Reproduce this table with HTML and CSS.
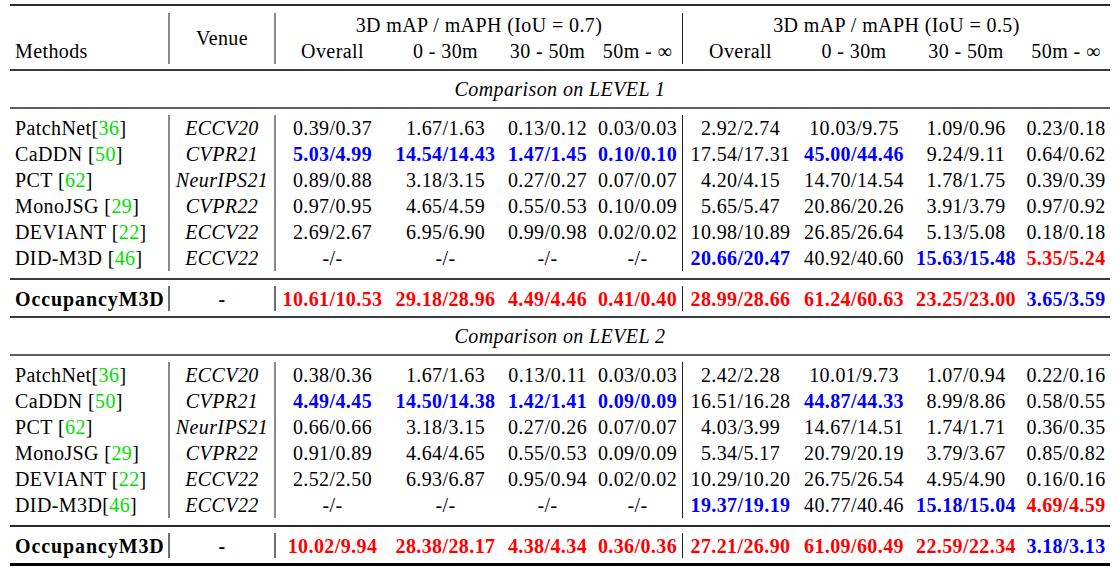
FILE: index.html
```html
<!DOCTYPE html>
<html lang="en">
<head>
<meta charset="utf-8">
<title>OccupancyM3D comparison</title>
<link rel="stylesheet" href="styles.css">
</head>
<body>
<div class="page">
<table class="results">
  <colgroup>
    <col class="c-method"><col class="c-venue">
    <col class="c-a1"><col class="c-a2"><col class="c-a3"><col class="c-a4">
    <col class="c-b1"><col class="c-b2"><col class="c-b3"><col class="c-b4">
  </colgroup>
  <tbody>
    <tr class="rule"><td colspan="10" class="r-top"><div class="line line-top"></div></td></tr>
    <tr class="head1">
      <td rowspan="2" class="method sep-l methods-head">Methods</td>
      <td rowspan="2" class="venue-head sep-l">Venue</td>
      <td colspan="4" class="sep-d">3D mAP / mAPH (IoU = 0.7)</td>
      <td colspan="4">3D mAP / mAPH (IoU = 0.5)</td>
    </tr>
    <tr class="head2">
      <td>Overall</td><td>0 - 30m</td><td>30 - 50m</td><td class="sep-d">50m - ∞</td>
      <td>Overall</td><td>0 - 30m</td><td>30 - 50m</td><td>50m - ∞</td>
    </tr>
    <tr class="rule"><td colspan="10" class="r-gap-top"><div class="line line-mid"></div></td></tr>
    <tr class="caption"><td colspan="10">Comparison on LEVEL 1</td></tr>
    <tr class="rule"><td colspan="10" class="r-gap-bottom"><div class="line line-soft"></div></td></tr>

    <tr class="data">
      <td class="method sep-l">PatchNet[<span class="cite">36</span>]</td><td class="venue sep-l">ECCV20</td>
      <td>0.39/0.37</td><td>1.67/1.63</td><td>0.13/0.12</td><td class="sep-d">0.03/0.03</td>
      <td>2.92/2.74</td><td>10.03/9.75</td><td>1.09/0.96</td><td>0.23/0.18</td>
    </tr>
    <tr class="data">
      <td class="method sep-l">CaDDN [<span class="cite">50</span>]</td><td class="venue sep-l">CVPR21</td>
      <td class="blue">5.03/4.99</td><td class="blue">14.54/14.43</td><td class="blue">1.47/1.45</td><td class="blue sep-d">0.10/0.10</td>
      <td>17.54/17.31</td><td class="blue">45.00/44.46</td><td>9.24/9.11</td><td>0.64/0.62</td>
    </tr>
    <tr class="data">
      <td class="method sep-l">PCT [<span class="cite">62</span>]</td><td class="venue sep-l">NeurIPS21</td>
      <td>0.89/0.88</td><td>3.18/3.15</td><td>0.27/0.27</td><td class="sep-d">0.07/0.07</td>
      <td>4.20/4.15</td><td>14.70/14.54</td><td>1.78/1.75</td><td>0.39/0.39</td>
    </tr>
    <tr class="data">
      <td class="method sep-l">MonoJSG [<span class="cite">29</span>]</td><td class="venue sep-l">CVPR22</td>
      <td>0.97/0.95</td><td>4.65/4.59</td><td>0.55/0.53</td><td class="sep-d">0.10/0.09</td>
      <td>5.65/5.47</td><td>20.86/20.26</td><td>3.91/3.79</td><td>0.97/0.92</td>
    </tr>
    <tr class="data">
      <td class="method sep-l">DEVIANT [<span class="cite">22</span>]</td><td class="venue sep-l">ECCV22</td>
      <td>2.69/2.67</td><td>6.95/6.90</td><td>0.99/0.98</td><td class="sep-d">0.02/0.02</td>
      <td>10.98/10.89</td><td>26.85/26.64</td><td>5.13/5.08</td><td>0.18/0.18</td>
    </tr>
    <tr class="data">
      <td class="method sep-l">DID-M3D [<span class="cite">46</span>]</td><td class="venue sep-l">ECCV22</td>
      <td>-/-</td><td>-/-</td><td>-/-</td><td class="sep-d">-/-</td>
      <td class="blue">20.66/20.47</td><td>40.92/40.60</td><td class="blue">15.63/15.48</td><td class="red">5.35/5.24</td>
    </tr>

    <tr class="rule"><td colspan="10" class="r-gap-both"><div class="line line-mid"></div></td></tr>
    <tr class="ours">
      <td class="method sep-o">OccupancyM3D</td><td class="sep-o">-</td>
      <td class="red">10.61/10.53</td><td class="red">29.18/28.96</td><td class="red">4.49/4.46</td><td class="red sep-d">0.41/0.40</td>
      <td class="red">28.99/28.66</td><td class="red">61.24/60.63</td><td class="red">23.25/23.00</td><td class="blue">3.65/3.59</td>
    </tr>
    <tr class="rule"><td colspan="10" class="r-gap-top"><div class="line line-mid"></div></td></tr>
    <tr class="caption"><td colspan="10">Comparison on LEVEL 2</td></tr>
    <tr class="rule"><td colspan="10" class="r-gap-bottom"><div class="line line-soft"></div></td></tr>

    <tr class="data">
      <td class="method sep-l">PatchNet[<span class="cite">36</span>]</td><td class="venue sep-l">ECCV20</td>
      <td>0.38/0.36</td><td>1.67/1.63</td><td>0.13/0.11</td><td class="sep-d">0.03/0.03</td>
      <td>2.42/2.28</td><td>10.01/9.73</td><td>1.07/0.94</td><td>0.22/0.16</td>
    </tr>
    <tr class="data">
      <td class="method sep-l">CaDDN [<span class="cite">50</span>]</td><td class="venue sep-l">CVPR21</td>
      <td class="blue">4.49/4.45</td><td class="blue">14.50/14.38</td><td class="blue">1.42/1.41</td><td class="blue sep-d">0.09/0.09</td>
      <td>16.51/16.28</td><td class="blue">44.87/44.33</td><td>8.99/8.86</td><td>0.58/0.55</td>
    </tr>
    <tr class="data">
      <td class="method sep-l">PCT [<span class="cite">62</span>]</td><td class="venue sep-l">NeurIPS21</td>
      <td>0.66/0.66</td><td>3.18/3.15</td><td>0.27/0.26</td><td class="sep-d">0.07/0.07</td>
      <td>4.03/3.99</td><td>14.67/14.51</td><td>1.74/1.71</td><td>0.36/0.35</td>
    </tr>
    <tr class="data">
      <td class="method sep-l">MonoJSG [<span class="cite">29</span>]</td><td class="venue sep-l">CVPR22</td>
      <td>0.91/0.89</td><td>4.64/4.65</td><td>0.55/0.53</td><td class="sep-d">0.09/0.09</td>
      <td>5.34/5.17</td><td>20.79/20.19</td><td>3.79/3.67</td><td>0.85/0.82</td>
    </tr>
    <tr class="data">
      <td class="method sep-l">DEVIANT [<span class="cite">22</span>]</td><td class="venue sep-l">ECCV22</td>
      <td>2.52/2.50</td><td>6.93/6.87</td><td>0.95/0.94</td><td class="sep-d">0.02/0.02</td>
      <td>10.29/10.20</td><td>26.75/26.54</td><td>4.95/4.90</td><td>0.16/0.16</td>
    </tr>
    <tr class="data">
      <td class="method sep-l">DID-M3D[<span class="cite">46</span>]</td><td class="venue sep-l">ECCV22</td>
      <td>-/-</td><td>-/-</td><td>-/-</td><td class="sep-d">-/-</td>
      <td class="blue">19.37/19.19</td><td>40.77/40.46</td><td class="blue">15.18/15.04</td><td class="red">4.69/4.59</td>
    </tr>

    <tr class="rule"><td colspan="10" class="r-gap-both"><div class="line line-dark"></div></td></tr>
    <tr class="ours">
      <td class="method sep-o">OccupancyM3D</td><td class="sep-o">-</td>
      <td class="red">10.02/9.94</td><td class="red">28.38/28.17</td><td class="red">4.38/4.34</td><td class="red sep-d">0.36/0.36</td>
      <td class="red">27.21/26.90</td><td class="red">61.09/60.49</td><td class="red">22.59/22.34</td><td class="blue">3.18/3.13</td>
    </tr>
    <tr class="rule"><td colspan="10" class="r-gap-top"><div class="line line-bottom"></div></td></tr>
  </tbody>
</table>
</div>
</body>
</html>
```

FILE: styles.css
```css
html, body {
  margin: 0;
  padding: 0;
  background: #ffffff;
}

.page {
  padding: 4px 0 0 10px;
}

.results {
  width: 1100px;
  table-layout: fixed;
  border-collapse: separate;
  border-spacing: 0;
  font-family: "Liberation Serif", "Times New Roman", serif;
  font-size: 20px;
  letter-spacing: 0.4px;
  color: #000;
}

.c-method { width: 160px; }
.c-venue { width: 106px; }
.c-a1 { width: 113px; }
.c-a2 { width: 113px; }
.c-a3 { width: 91px; }
.c-a4 { width: 90px; }
.c-b1 { width: 115px; }
.c-b2 { width: 112px; }
.c-b3 { width: 112px; }
.c-b4 { width: 88px; }

.results td {
  padding: 0;
  text-align: center;
  vertical-align: middle;
  line-height: 1;
  white-space: nowrap;
}

.results td.method {
  text-align: left;
  padding-left: 5px;
}

.sep-l { border-right: 2px solid #8a8a8a; }
.sep-o { border-right: 2px solid #707070; }
.sep-d { border-right: 1px solid #222; }

/* header */
.head1 td { height: 24px; }
.head2 td { height: 27px; }
.methods-head { vertical-align: bottom !important; padding-bottom: 3px !important; }
.venue-head { padding-bottom: 2px !important; }

/* rules */
.rule td { padding: 0; }
.r-top { padding: 0 0 7px !important; }
.r-gap-top { padding: 5px 0 0 !important; }
.r-gap-bottom { padding: 0 0 6px !important; }
.r-gap-both { padding: 7px 0 6px !important; }

.line { height: 2px; }
.line-top { background: #2e2e2e; }
.line-mid { background: #3c3c3c; }
.line-soft { background: #5e5e5e; }
.line-dark { background: #2a2a2a; }
.line-bottom { height: 3px; background: #000; }

/* caption rows */
.caption td {
  height: 36px;
  font-style: italic;
}

/* data rows */
.data td { height: 26px; }
.venue { font-style: italic; }
.cite { color: #00e000; }

.ours td {
  height: 25px;
  font-weight: bold;
}

.ours td.method { letter-spacing: 0.9px; }

.blue { color: #0000ff; font-weight: bold; }
.red { color: #ff0000; font-weight: bold; }
```
